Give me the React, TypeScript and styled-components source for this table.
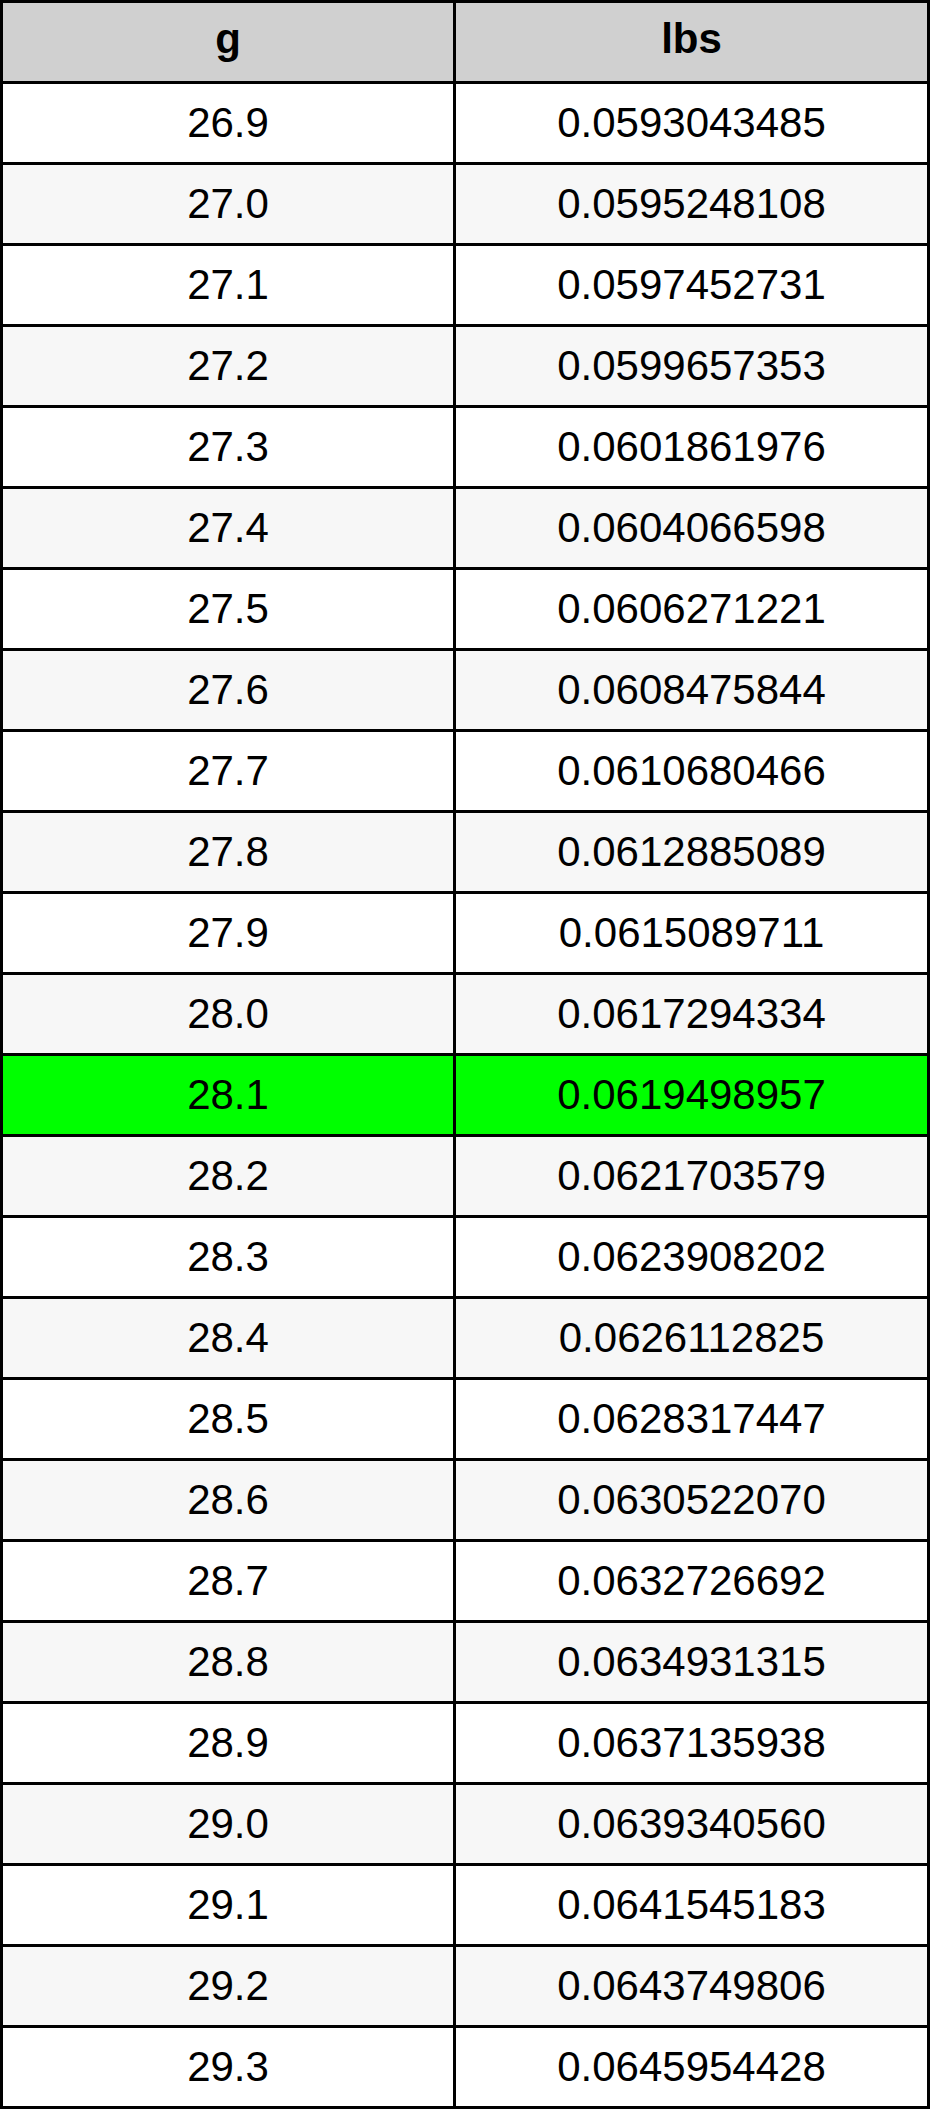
import styled, { createGlobalStyle } from "styled-components";

const GlobalStyle = createGlobalStyle`
  html, body {
    margin: 0;
    padding: 0;
    background: #fff;
  }
`;

const Table = styled.div`
  width: 930px;
  display: grid;
  grid-template-columns: 453px 474px;
  grid-auto-rows: 81px;
  border-top: 3px solid #000;
  border-left: 3px solid #000;
  box-sizing: border-box;
  font-family: "Liberation Sans", Arial, sans-serif;
  color: #000;
`;

type CellTone = "head" | "plain" | "alt" | "hit";

const tones: Record<CellTone, string> = {
  head: "#d0d0d0",
  plain: "#ffffff",
  alt: "#f7f7f7",
  hit: "#00ff00",
};

const Cell = styled.div<{ $tone: CellTone }>`
  display: flex;
  align-items: center;
  justify-content: center;
  border-right: 3px solid #000;
  border-bottom: 3px solid #000;
  background: ${(p) => tones[p.$tone]};
  font-size: 42px;
  font-weight: ${(p) => (p.$tone === "head" ? 700 : 400)};
  padding-bottom: ${(p) => (p.$tone === "head" ? "6px" : "0")};
  box-sizing: border-box;
`;

const rows: [string, string][] = [
  ["26.9", "0.0593043485"],
  ["27.0", "0.0595248108"],
  ["27.1", "0.0597452731"],
  ["27.2", "0.0599657353"],
  ["27.3", "0.0601861976"],
  ["27.4", "0.0604066598"],
  ["27.5", "0.0606271221"],
  ["27.6", "0.0608475844"],
  ["27.7", "0.0610680466"],
  ["27.8", "0.0612885089"],
  ["27.9", "0.0615089711"],
  ["28.0", "0.0617294334"],
  ["28.1", "0.0619498957"],
  ["28.2", "0.0621703579"],
  ["28.3", "0.0623908202"],
  ["28.4", "0.0626112825"],
  ["28.5", "0.0628317447"],
  ["28.6", "0.0630522070"],
  ["28.7", "0.0632726692"],
  ["28.8", "0.0634931315"],
  ["28.9", "0.0637135938"],
  ["29.0", "0.0639340560"],
  ["29.1", "0.0641545183"],
  ["29.2", "0.0643749806"],
  ["29.3", "0.0645954428"],
];

const HIGHLIGHT = "28.1";

export default function App() {
  return (
    <>
      <GlobalStyle />
      <Table>
        <Cell $tone="head">g</Cell>
        <Cell $tone="head">lbs</Cell>
        {rows.map(([g, lbs], i) => {
          const tone: CellTone = g === HIGHLIGHT ? "hit" : i % 2 ? "alt" : "plain";
          return [
            <Cell key={`g-${g}`} $tone={tone}>{g}</Cell>,
            <Cell key={`l-${g}`} $tone={tone}>{lbs}</Cell>,
          ];
        })}
      </Table>
    </>
  );
}
